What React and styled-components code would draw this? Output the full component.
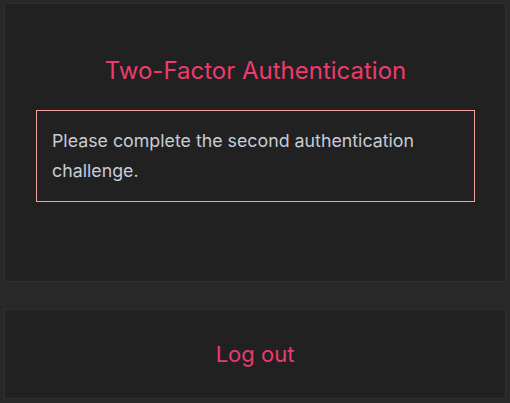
import React from 'react'
import styled, { createGlobalStyle } from 'styled-components'

const pageBg = '#282828'
const cardBg = '#212121'
const cardBorder = '#2f2f2f'
const accent = '#ee3a6e'
const salmon = '#f3a39b'
const textColor = '#c6ccd8'

const GlobalStyle = createGlobalStyle`
  html, body {
    margin: 0;
    padding: 0;
    background: ${pageBg};
  }
  body {
    font-family: Inter, "Noto Sans", sans-serif;
  }
`

const Page = styled.div`
  display: flex;
  flex-direction: column;
  gap: 27px;
  padding: 3px 4px 4px;
`

const Card = styled.section`
  background: ${cardBg};
  border: 1px solid ${cardBorder};
  display: flex;
  flex-direction: column;
  align-items: ${(p) => (p.$center ? 'center' : 'stretch')};
  justify-content: center;
  min-height: ${(p) => p.$minHeight || 'auto'};
  padding: ${(p) => p.$padding || '0'};
`

const Title = styled.h1`
  margin: 0 0 24px;
  font-size: 24px;
  line-height: 30px;
  font-weight: 400;
  color: ${accent};
  text-align: center;
`

const Notice = styled.div`
  border: 1px solid ${salmon};
  padding: 15px;
  font-size: 17.8px;
  line-height: 30px;
  color: ${textColor};
`

const LogOut = styled.a`
  font-size: 22px;
  line-height: 30px;
  color: ${accent};
  text-decoration: none;
  cursor: pointer;
`

export default function App() {
  return (
    <>
      <GlobalStyle />
      <Page>
        <Card $padding="52px 30px 79px 31px">
          <Title>Two-Factor Authentication</Title>
          <Notice>Please complete the second authentication challenge.</Notice>
        </Card>
        <Card $center $minHeight="88px">
          <LogOut>Log out</LogOut>
        </Card>
      </Page>
    </>
  )
}
